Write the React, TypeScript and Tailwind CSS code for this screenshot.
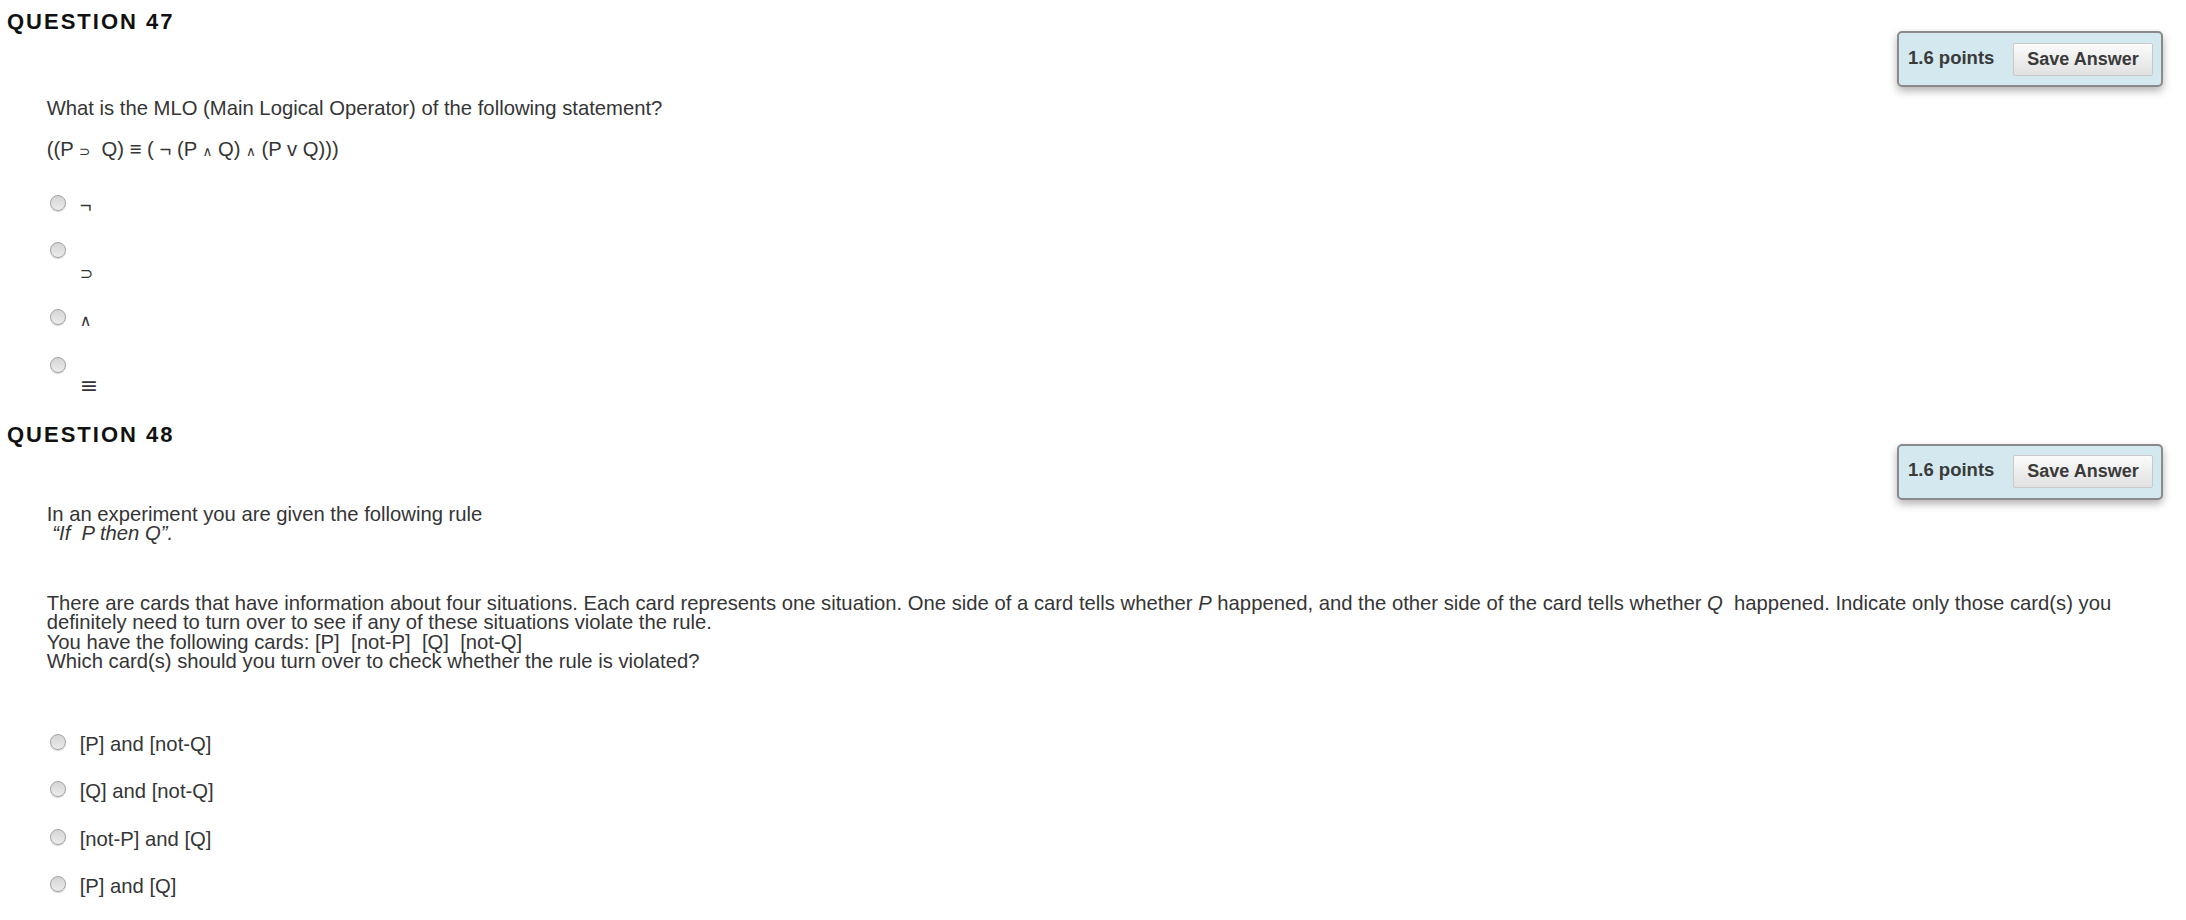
import React from 'react';

interface Option {
  label: React.ReactNode;
  wrapped?: boolean;
}

const Radio: React.FC = () => (
  <span className="mt-[-1px] ml-[3px] inline-block h-4 w-4 shrink-0 rounded-full border border-[#a3a3a3] bg-linear-to-b from-[#d4d4d4] to-[#ececec] shadow-[0_1px_1px_rgba(0,0,0,0.18)]" />
);

const Sym: React.FC<{ children: React.ReactNode; size?: string }> = ({ children, size = 'text-[13.5px]' }) => (
  <span className={`font-['DejaVu_Sans',sans-serif] leading-[0] ${size}`}>{children}</span>
);

const PointsBox: React.FC = () => (
  <div className="flex justify-end pr-[23px]">
    <div className="flex h-[56px] w-[266px] items-center rounded-[5px] border-2 border-[#8a8a8a] bg-[#d3e9ef] pl-[9px] pr-[8px] shadow-[0_4px_8px_rgba(0,0,0,0.3)]">
      <span className="mb-[3px] text-[18.5px] font-bold text-[#3a3a3a]">1.6 points</span>
      <button className="ml-auto h-[33px] w-[140px] rounded-[2px] border border-[#c9c9c9] bg-linear-to-b from-[#fbfbfb] to-[#e1e1e1] text-[18px] font-bold text-[#3a3a3a]">
        Save Answer
      </button>
    </div>
  </div>
);

const OptionList: React.FC<{ options: Option[] }> = ({ options }) => (
  <div>
    {options.map((opt, i) => (
      <div key={i} className="flex items-start py-[14px]">
        <Radio />
        <div className="ml-[14px] leading-[19.5px]">
          {opt.wrapped && <span className="block h-[19.5px]" />}
          <span className="block h-[19.5px] whitespace-pre">{opt.label}</span>
        </div>
      </div>
    ))}
  </div>
);

const Question: React.FC<{ number: number; children: React.ReactNode }> = ({ number, children }) => (
  <section>
    <div className="h-[31px] pl-[7px] pt-[13px]">
      <h3 className="text-[22px] font-bold leading-[18px] tracking-[2px] text-[#111]">QUESTION {number}</h3>
    </div>
    <PointsBox />
    <div className="pl-[46.7px] pr-[23px] text-[20.25px] leading-[19.5px] text-[#353535]">{children}</div>
  </section>
);

export default function App() {
  const q47Options: Option[] = [
    { label: '¬' },
    { label: <Sym size="text-[16px]">⊃</Sym>, wrapped: true },
    { label: <Sym size="text-[16px]">∧</Sym> },
    { label: <Sym size="text-[22px]">≡</Sym>, wrapped: true },
  ];
  const q48Options: Option[] = [
    { label: '[P] and [not-Q]' },
    { label: '[Q] and [not-Q]' },
    { label: '[not-P] and [Q]' },
    { label: '[P] and [Q]' },
  ];

  return (
    <div className="min-h-screen bg-white font-['Liberation_Sans','Helvetica','Arial',sans-serif]">
      <div className="pb-[2px]">
        <Question number={47}>
          <p className="mt-[12px]">What is the MLO (Main Logical Operator) of the following statement?</p>
          <p className="mt-[21px] h-[19.5px] whitespace-pre">
            {'((P '}
            <Sym>⊃</Sym>
            {'  Q) ≡ ( ¬ (P '}
            <Sym>∧</Sym>
            {' Q) '}
            <Sym>∧</Sym>
            {' (P v Q)))'}
          </p>
          <div className="mt-[22.5px]">
            <OptionList options={q47Options} />
          </div>
        </Question>
      </div>
      <Question number={48}>
        <div className="mt-[5px]">
          <p>In an experiment you are given the following rule</p>
          <p className="whitespace-pre italic">{' “If  P then Q”.'}</p>
        </div>
        <p className="mt-[50px] whitespace-pre">
          {'There are cards that have information about four situations. Each card represents one situation. One side of a card tells whether '}
          <i>P</i>
          {' happened, and the other side of the card tells whether '}
          <i>Q</i>
          {'  happened. Indicate only those card(s) you'}
          <br />
          {'definitely need to turn over to see if any of these situations violate the rule.'}
          <br />
          {'You have the following cards: [P]  [not-P]  [Q]  [not-Q]'}
          <br />
          {'Which card(s) should you turn over to check whether the rule is violated?'}
        </p>
        <div className="mt-[49px]">
          <OptionList options={q48Options} />
        </div>
      </Question>
    </div>
  );
}
